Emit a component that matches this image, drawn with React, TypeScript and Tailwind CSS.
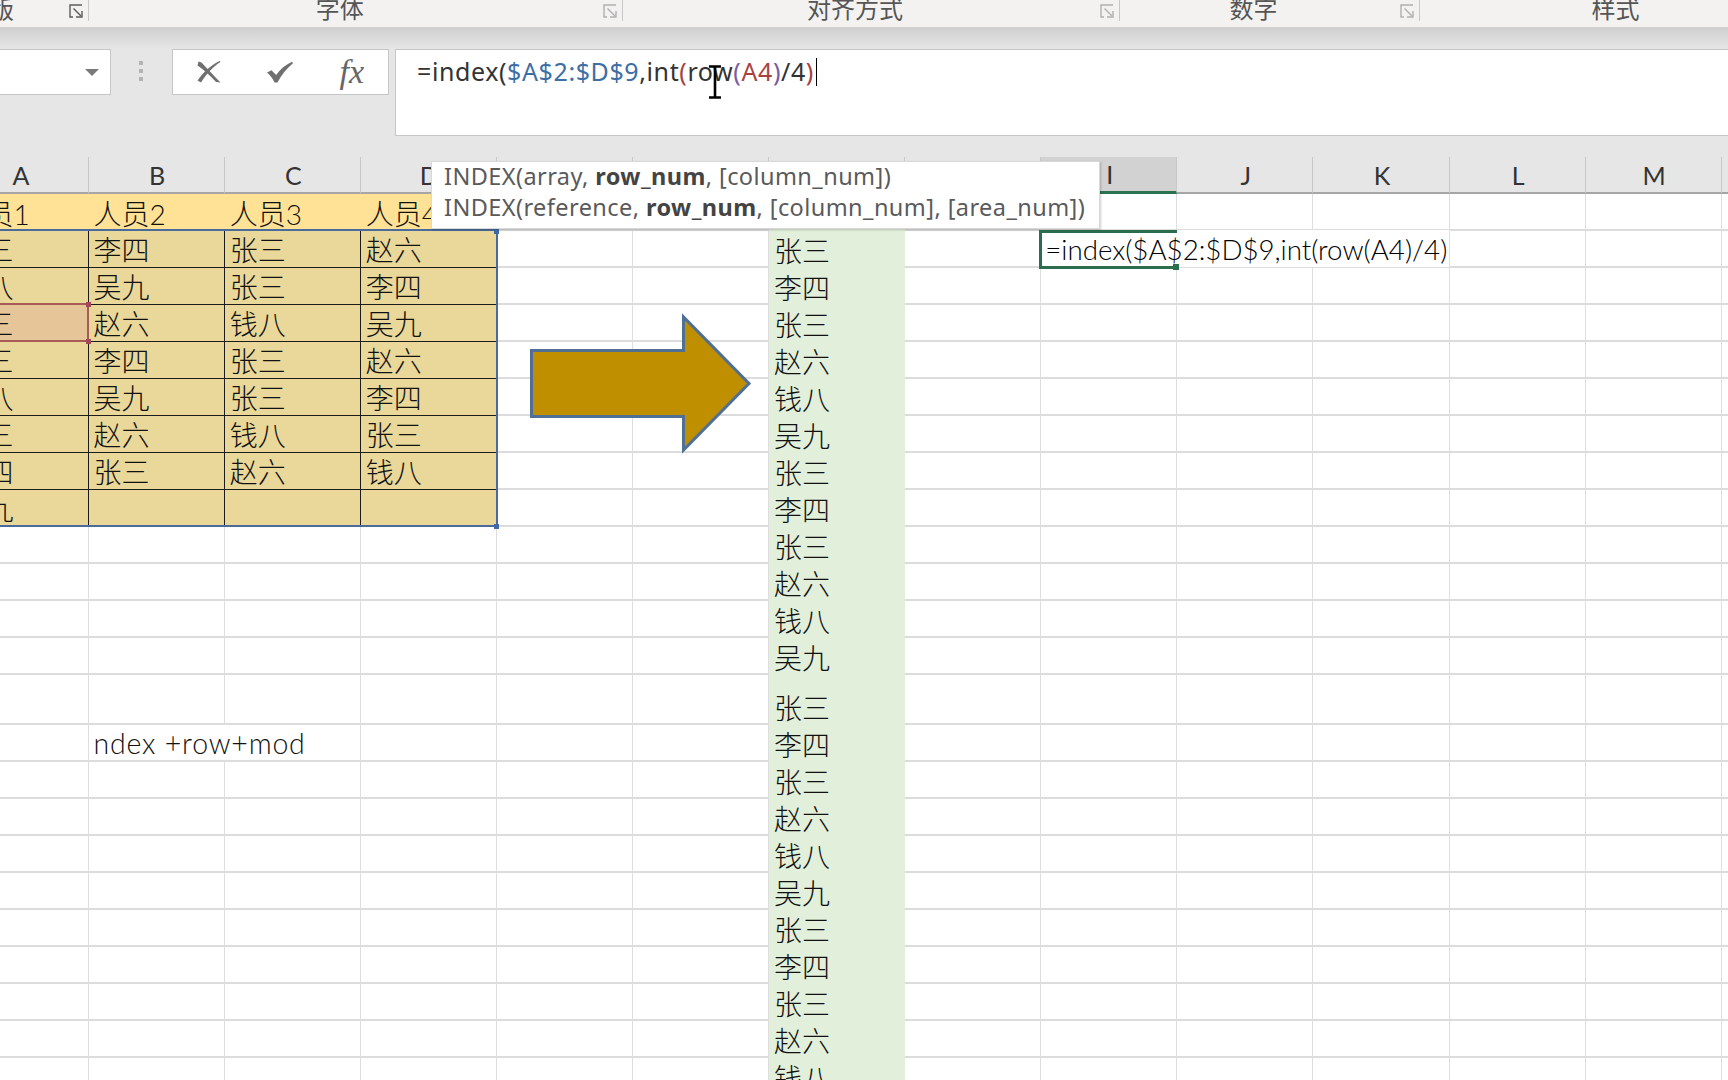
import { Fragment } from "react";

const cellFont = "font-['Lato','Noto_Sans_CJK_SC',sans-serif] font-light";
const columns = ["A", "B", "C", "D", "", "", "", "", "I", "J", "K", "L", "M", ""];

const tableRows = [
  ["人员1", "人员2", "人员3", "人员4"],
  ["张三", "李四", "张三", "赵六"],
  ["钱八", "吴九", "张三", "李四"],
  ["张三", "赵六", "钱八", "吴九"],
  ["张三", "李四", "张三", "赵六"],
  ["钱八", "吴九", "张三", "李四"],
  ["张三", "赵六", "钱八", "张三"],
  ["李四", "张三", "赵六", "钱八"],
  ["吴九", "", "", ""],
];

const greenCol = [
  "张三", "李四", "张三", "赵六", "钱八", "吴九", "张三", "李四", "张三", "赵六", "钱八", "吴九",
  "张三", "李四", "张三", "赵六", "钱八", "吴九", "张三", "李四", "张三", "赵六", "钱八",
];

const ribbonGroups = [
  { label: "版", width: "w-[89px]", text: "justify-start", launcher: "dark" },
  { label: "字体", width: "w-[533.5px]", text: "justify-center pr-[32px]", launcher: "light" },
  { label: "对齐方式", width: "w-[497px]", text: "justify-center pr-[32px]", launcher: "light" },
  { label: "数字", width: "w-[300px]", text: "justify-center pr-[32px]", launcher: "light" },
  { label: "样式", width: "w-[308px]", text: "justify-center pl-[84px]", launcher: "" },
];

function Launcher({ dark }: { dark: boolean }) {
  const color = dark ? "#5c5c5c" : "#b0b0b0";
  return (
    <svg width="16" height="16" viewBox="0 0 16 16" fill="none" stroke={color} strokeWidth="1.4">
      <path d="M14 2H2V14H5" />
      <path d="M5.5 5.5L13 13" />
      <path d="M14 8V14H8" />
    </svg>
  );
}

function Ribbon() {
  return (
    <div className="h-[27px] flex bg-[#f3f2f1] overflow-hidden shrink-0">
      {ribbonGroups.map((g, i) => (
        <div key={g.label} className={`${g.width} relative flex shrink-0 ${g.text}`}>
          <span
            className={`font-['Noto_Sans_CJK_SC',sans-serif] text-[24px] leading-[24px] -mt-[4px] text-[#555555] ${
              i === 0 ? "-ml-[10px]" : ""
            }`}
          >
            {g.label}
          </span>
          {g.launcher && (
            <div className="absolute right-[5px] top-[3px] flex">
              <Launcher dark={g.launcher === "dark"} />
            </div>
          )}
          {g.launcher && <div className="absolute right-0 top-0 h-[21px] w-px bg-[#c8c8c8]" />}
        </div>
      ))}
    </div>
  );
}

function FormulaArea() {
  return (
    <div className="h-[130px] shrink-0 bg-[#e6e6e6]">
      <div className="h-[22px] bg-linear-to-b from-[#cfcfcf] to-[#e6e6e6]" />
      <div className="flex h-[87px] items-start">
        <div className="w-[110.5px] h-[46px] shrink-0 bg-white border border-l-0 border-[#c6c6c6] flex items-center justify-end pr-[11px]">
          <div className="w-0 h-0 border-x-[7px] border-x-transparent border-t-[7px] border-t-[#7a7a7a]" />
        </div>
        <div className="w-[61px] shrink-0 flex flex-col items-center gap-[4px] pt-[12px]">
          <div className="w-[4px] h-[4px] bg-[#b4b4b4]" />
          <div className="w-[4px] h-[4px] bg-[#b4b4b4]" />
          <div className="w-[4px] h-[4px] bg-[#b4b4b4]" />
        </div>
        <div className="w-[217.5px] h-[46px] shrink-0 bg-white border border-[#c6c6c6] flex items-center">
          <svg className="ml-[23px]" width="26" height="24" viewBox="0 0 26 24" fill="none">
            <path d="M2.5 1.5L5.5 2.5C11 8 17 15 24.5 22.5L20 22C14 15.5 8 10 1.5 5.5Z" fill="#707070" />
            <path d="M24.5 2C17 6.5 10.5 14 5 22.5L1.5 20.5C7.5 12 14.5 5.5 23.5 1Z" fill="#707070" />
          </svg>
          <svg className="ml-[44px]" width="28" height="22" viewBox="0 0 28 22" fill="none">
            <path d="M1 11.5L5.5 9.2L10.2 14C14 8.5 19 4 26 0.8L27 2.2C20.5 7.5 15.5 14 11.5 21.5L8.5 21.5C6.8 17.5 4 14 1 11.5Z" fill="#707070" />
          </svg>
          <span className="ml-[46px] font-['Liberation_Serif',serif] italic text-[34px] leading-[34px] text-[#666666]">
            fx
          </span>
        </div>
        <div className="ml-[6px] self-stretch flex-1 bg-white border border-r-0 border-[#c6c6c6] relative pl-[21px] pt-[3px]">
          <span className="font-['Noto_Sans',sans-serif] text-[25px] leading-[36px] tracking-[0.6px] text-[#333333] whitespace-nowrap">
            =index(
            <span className="text-[#3d6ea5]">$A$2:$D$9</span>
            ,int
            <span className="text-[#a8423f]">(</span>
            row
            <span className="text-[#7b5aa6]">(</span>
            <span className="text-[#a8423f]">A4</span>
            <span className="text-[#7b5aa6]">)</span>
            /4
            <span className="text-[#a8423f]">)</span>
            <span className="inline-block align-[-5px] w-px h-[28px] ml-[2px] bg-black" />
          </span>
          <svg className="absolute left-[309px] top-[15px]" width="20" height="34" viewBox="0 0 20 34" fill="none" stroke="#000000">
            <path d="M4 1.5H16M4 32.5H16" strokeWidth="2.6" />
            <path d="M10 1.5V32.5" strokeWidth="2.6" />
          </svg>
        </div>
      </div>
    </div>
  );
}

function ColumnHeaders() {
  return (
    <div className="h-[36.5px] shrink-0 -ml-[47.5px] grid grid-cols-[repeat(14,136.1px)] bg-[#e6e6e6]">
      {columns.map((c, i) => (
        <div
          key={i}
          className={`border-r border-[#c8c8c8] flex items-center justify-center pt-[1px] pl-[2px] font-['Lato',sans-serif] text-[25px] leading-[30px] text-[#333333] ${
            c === "I" ? "bg-[#d2d2d2] border-b-[3px] border-b-[#2b7250]" : "border-b-2 border-b-[#a6a6a6]"
          }`}
        >
          {c}
        </div>
      ))}
    </div>
  );
}

function rowHeight(r: number) {
  if (r === 0) return "h-[37.5px]";
  if (r === 13) return "h-[50px]";
  return "h-[37px]";
}

function cellClass(r: number, c: number) {
  const base = "relative whitespace-nowrap pl-[5px] flex items-end text-[28px] leading-[33px] text-[#111111]";
  if (c < 4 && r === 0) return `${base} bg-[#ffe296]`;
  if (c < 4 && r <= 8) {
    const selected = c === 0 && r === 3;
    return `${base} ${selected ? "bg-[#e6c698]" : "bg-[#e9d899]"} border-r border-b border-[#1c1c1c]`;
  }
  if (c === 6) return `${base} bg-[#e2efda]`;
  if (c === 1 && r === 14) return `${base} border-b-2 border-[#dcdcdc]`;
  return `${base} border-r border-b-2 border-r-[#dedede] border-b-[#dcdcdc]`;
}

function Sheet() {
  const rows = Array.from({ length: 24 }, (_, r) => r);
  return (
    <div className="relative flex-1">
      <div className={`-ml-[47.5px] ${cellFont}`}>
        {rows.map((r) => (
          <div key={r} className={`grid grid-cols-[repeat(14,136.1px)] ${rowHeight(r)}`}>
            {columns.map((_, c) => (
              <div key={c} className={cellClass(r, c)}>
                {c < 4 && r <= 8 ? tableRows[r][c] : null}
                {c === 6 && r >= 1 ? greenCol[r - 1] : null}
                {c === 1 && r === 14 ? <span className="text-[28.5px] tracking-[0.8px]">ndex +row+mod</span> : null}
                {c === 8 && r === 1 ? (
                  <div className="absolute -left-[2px] -top-[1px] w-[410px] h-[37px] bg-white pl-[6px] text-[27.7px] leading-[39px] text-black z-10">
                    =index($A$2:$D$9,int(row(A4)/4)
                  </div>
                ) : null}
                {c === 8 && r === 1 ? (
                  <>
                    <div className="absolute -left-[2px] -top-[1.5px] w-[138px] h-[39px] border-[3px] border-r-0 border-[#2b6e4f] z-10" />
                    <div className="absolute left-[132px] top-[33px] w-[6px] h-[6px] bg-[#2b6e4f] z-10" />
                  </>
                ) : null}
              </div>
            ))}
          </div>
        ))}
      </div>

      {/* table selection (blue) */}
      <div className="absolute left-[-8px] top-[35.5px] w-[505.5px] h-[298.3px] border-2 border-[#4a6c9c] pointer-events-none" />
      <div className="absolute left-[494px] top-[35.2px] w-[5px] h-[5px] bg-[#3f6aa6]" />
      <div className="absolute left-[494px] top-[330.5px] w-[5px] h-[5px] bg-[#3f6aa6]" />

      {/* referenced cell (red) */}
      <div className="absolute left-[-8px] top-[109.8px] w-[97px] h-[39px] border-[2px] border-[#a85a55] pointer-events-none" />
      <div className="absolute left-[86px] top-[108px] w-[5px] h-[5px] bg-[#a5475a]" />
      <div className="absolute left-[86px] top-[145px] w-[5px] h-[5px] bg-[#a5475a]" />

      {/* arrow */}
      <svg className="absolute left-[525px] top-[118px]" width="232" height="144" viewBox="0 0 232 144" fill="#bf8f00" stroke="#4f7094" strokeWidth="3">
        <path d="M6.5 38.5H158.5V5L224 71.5L158.5 138V104.5H6.5Z" />
      </svg>

      {/* tooltip */}
      <div className="absolute left-[431px] -top-[33px] w-[669px] h-[68px] bg-white border border-[#d8d8d8] shadow-[1px_1px_2px_rgba(0,0,0,0.2)] pl-[12px] -mt-0 font-['Noto_Sans',sans-serif] text-[23.5px] leading-[31px] tracking-[0.43px] text-[#5a5a5a] whitespace-nowrap z-20">
        <div className="-mt-[1px]">
          INDEX(array, <b className="font-bold text-[#444444]">row_num</b>, [column_num])
        </div>
        <div>
          INDEX(reference, <b className="font-bold text-[#444444]">row_num</b>, [column_num], [area_num])
        </div>
      </div>
    </div>
  );
}

export default function App() {
  return (
    <Fragment>
      <div className="w-[1728px] h-[1080px] overflow-hidden flex flex-col bg-white">
        <Ribbon />
        <FormulaArea />
        <ColumnHeaders />
        <Sheet />
      </div>
    </Fragment>
  );
}
